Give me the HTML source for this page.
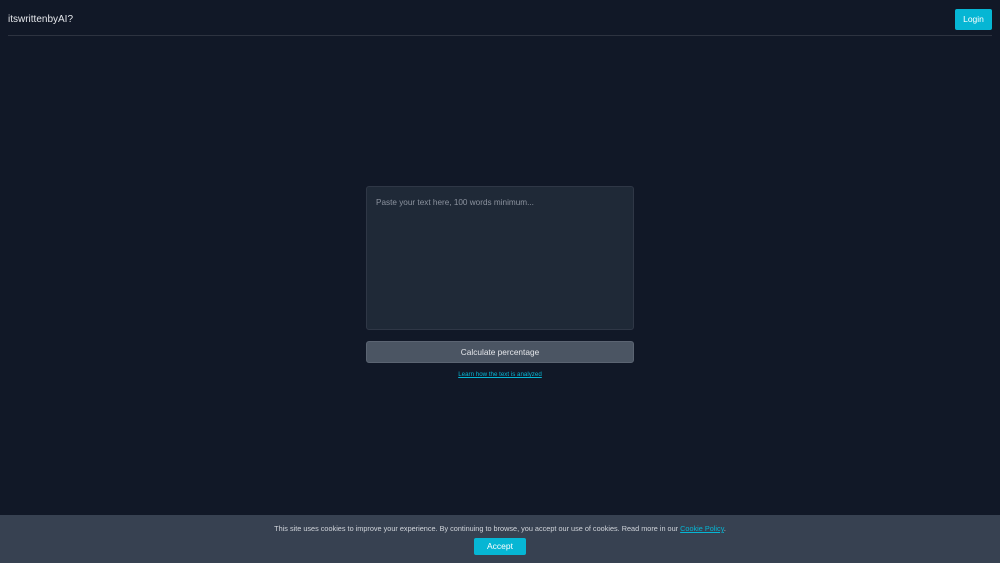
<!DOCTYPE html>
<html><head><meta charset="utf-8"><style>
*{box-sizing:border-box;margin:0;padding:0}
html,body{width:1000px;height:563px;overflow:hidden;background:#111827;font-family:"Liberation Sans",sans-serif;color:#e5e7eb}
.hdr{position:absolute;left:8px;right:8px;top:0;height:36px;border-bottom:1px solid #2d3340}
.logo{position:absolute;left:0;top:14px;font-size:10px;color:#e5e7eb}
.login{position:absolute;right:0;top:9px;width:37px;height:21px;background:#06b6d4;border-radius:2px;color:#fff;font-size:8.5px;text-align:center;line-height:21px}
.ta{position:absolute;left:366px;top:186px;width:268px;height:144px;background:#1f2937;border:1px solid #2f3746;border-radius:3px;padding:11px 9px;font-size:8.2px;color:#8b929e}
.btn{position:absolute;left:366px;top:341px;width:268px;height:22px;background:#4b5563;border:1px solid #5b6472;border-radius:3px;color:#e5e7eb;font-size:8.3px;text-align:center;line-height:21px}
.lnk{position:absolute;left:0;width:1000px;top:371px;text-align:center;font-size:6.2px;color:#06b6d4;text-decoration:underline}
.ck{position:absolute;left:0;top:515px;width:1000px;height:48px;background:#374151}
.ckt{position:absolute;top:9px;width:1000px;text-align:center;font-size:7.3px;color:#d1d5db}
.ckt a{color:#06b6d4}
.acc{position:absolute;left:474px;top:23px;width:52px;height:17px;background:#06b6d4;border-radius:2px;color:#fff;font-size:8.5px;text-align:center;line-height:17px}
</style></head><body>
<div class="hdr"><div class="logo">itswrittenbyAI?</div><div class="login">Login</div></div>
<div class="ta">Paste your text here, 100 words minimum...</div>
<div class="btn">Calculate percentage</div>
<div class="lnk">Learn how the text is analyzed</div>
<div class="ck"><div class="ckt">This site uses cookies to improve your experience. By continuing to browse, you accept our use of cookies. Read more in our <a href="#">Cookie Policy</a>.</div><div class="acc">Accept</div></div>
</body></html>
